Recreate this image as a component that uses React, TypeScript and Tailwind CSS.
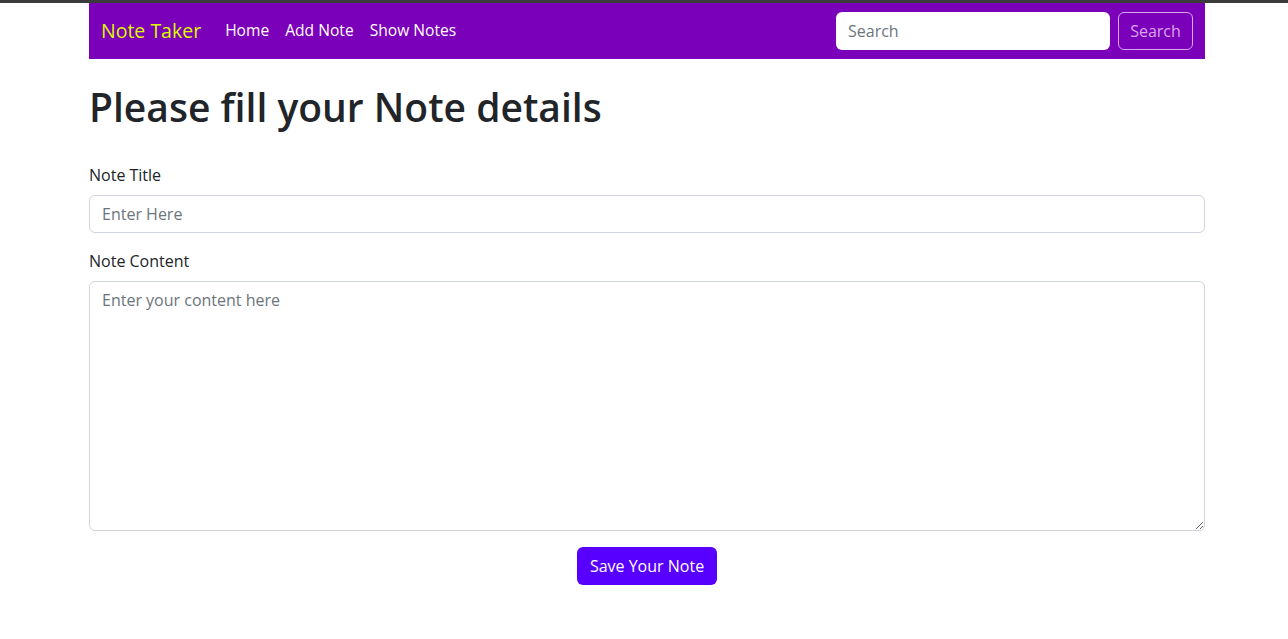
import { useState } from 'react'

export default function App() {
  const [title, setTitle] = useState('')
  const [content, setContent] = useState('')

  return (
    <div className="min-h-screen bg-white text-[#212529] font-['Open_Sans',sans-serif]">
      <div className="h-[3px] bg-[#3b3b3b]" />
      <div className="ml-[89px] w-[1116px]">
        <nav className="h-[56px] bg-[#7b00b9] flex items-center px-3">
          <a href="#" className="text-[19.5px] text-[#dff800] mr-[24px]">Note Taker</a>
          <div className="flex items-center gap-[16px] text-white text-[15.6px]">
            <a href="#">Home</a>
            <a href="#">Add Note</a>
            <a href="#">Show Notes</a>
          </div>
          <form className="ml-auto flex items-center gap-2" onSubmit={(e) => e.preventDefault()}>
            <input
              type="search"
              placeholder="Search"
              className="w-[274px] h-[38px] rounded-md bg-white px-3 text-[16px] placeholder:text-[#6c757d] outline-none"
            />
            <button className="w-[75px] h-[38px] rounded-md border border-[#d9a6ef] text-[#d9a6ef] text-[16px]">
              Search
            </button>
          </form>
        </nav>

        <h1 className="mt-6 mb-8 text-[39px] leading-[48px] font-semibold">Please fill your Note details</h1>

        <form onSubmit={(e) => e.preventDefault()}>
          <div className="mb-4">
            <label className="block mb-2 text-[16px] leading-6">Note Title</label>
            <input
              value={title}
              onChange={(e) => setTitle(e.target.value)}
              placeholder="Enter Here"
              className="w-full h-[38px] px-3 rounded-md border border-[#ced4da] text-[16px] placeholder:text-[#6c757d] outline-none"
            />
          </div>
          <div className="mb-4">
            <label className="block mb-2 text-[16px] leading-6">Note Content</label>
            <textarea
              value={content}
              onChange={(e) => setContent(e.target.value)}
              placeholder="Enter your content here"
              className="block w-full h-[250px] px-3 py-[6px] rounded-md border border-[#ced4da] text-[16px] leading-6 placeholder:text-[#6c757d] outline-none"
            />
          </div>
          <div className="flex justify-center">
            <button className="w-[140px] h-[38px] rounded-md bg-[#5700ff] text-white text-[16px]">
              Save Your Note
            </button>
          </div>
        </form>
      </div>
    </div>
  )
}
